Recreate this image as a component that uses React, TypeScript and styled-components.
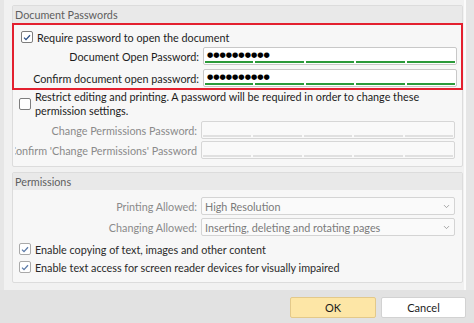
import React from 'react';
import styled, { createGlobalStyle } from 'styled-components';
import { ChevronDown } from 'lucide-react';

const GlobalStyle = createGlobalStyle`
  html, body {
    margin: 0;
    padding: 0;
    background: #e6e6e6;
  }
  * { box-sizing: border-box; }
`;

const Dialog = styled.div`
  width: 474px;
  height: 323px;
  display: flex;
  flex-direction: column;
  font-family: Lato, "Liberation Sans", sans-serif;
  font-size: 10.8px;
  color: #1c1c1c;
  overflow: hidden;
`;

const Body = styled.div`
  display: flex;
  height: 290px;
  padding-left: 4px;
`;

const Content = styled.div`
  width: 462px;
  background: #f1f1f1;
  border-right: 2px solid #fbfbfb;
  padding: 5px 1px 0 8px;
  display: flex;
  flex-direction: column;
  gap: 5px;
`;

const Group = styled.div<{ $h: number }>`
  height: ${p => p.$h}px;
  border: 1px solid #dcdcdc;
  border-radius: 2px;
  background: #f7f7f7;
  display: flex;
  flex-direction: column;
`;

const GroupTitle = styled.div`
  height: 17px;
  background: #e9e9e9;
  color: #5e5e5e;
  padding-left: 2px;
  line-height: 17px;
`;

const Highlight = styled.div`
  margin: 0 -1px;
  border: 2px solid #e3202f;
  padding: 6px 0 0 1px;
  height: 67px;
`;

const CheckRow = styled.div`
  display: flex;
  align-items: flex-start;
  gap: 4px;
  height: 18px;
  line-height: 13px;
  padding-left: 6px;
`;

const Box = styled.span<{ $soft?: boolean }>`
  flex: none;
  width: 12px;
  height: 12px;
  border: 1px solid ${p => (p.$soft ? '#a9a9a9' : '#7d7d7d')};
  border-radius: 2px;
  background: #fff;
  display: flex;
  align-items: center;
  justify-content: center;
`;

const Tick = ({ soft }: { soft?: boolean }) => (
  <svg width="8" height="7" viewBox="0 0 8 7">
    <path d="M1 3.6 L3 5.6 L7 1.2" fill="none" stroke={soft ? '#5b7aa8' : '#2b4f86'} strokeWidth="1.3" />
  </svg>
);

const FieldRow = styled.div<{ $top: number }>`
  display: flex;
  align-items: center;
  margin-top: ${p => p.$top}px;
  height: 18px;
`;

const Label = styled.div<{ $disabled?: boolean }>`
  width: 186px;
  margin-left: 2px;
  padding-right: 4px;
  display: flex;
  justify-content: flex-end;
  white-space: nowrap;
  overflow: hidden;
  color: ${p => (p.$disabled ? '#8a8a8a' : '#1c1c1c')};
`;

const Field = styled.div<{ $disabled?: boolean }>`
  width: 254px;
  height: 18px;
  border: 1px solid ${p => (p.$disabled ? '#d6d6d6' : '#c8c8c8')};
  border-radius: 2px;
  background: ${p => (p.$disabled ? '#f9f9f9' : '#fff')};
  display: flex;
  flex-direction: column;
  overflow: hidden;
`;

const Dots = styled.div`
  flex: 1;
  min-height: 0;
  padding: 3px 0 0 3px;
  font-family: "DejaVu Sans", sans-serif;
  font-size: 7.2px;
  line-height: 8px;
  color: #000;
`;

const Meter = styled.div`
  flex: none;
  display: flex;
  gap: 2px;
  height: 2px;
  margin: 0 1px 1px;
`;

const Segment = styled.span<{ $on: boolean }>`
  flex: 1;
  background: ${p => (p.$on ? '#2b9a3a' : '#e0e0e0')};
`;

const Select = styled.div`
  width: 254px;
  height: 18px;
  border: 1px solid #d4d4d4;
  border-radius: 2px;
  background: #fafafa;
  color: #7a7a7a;
  display: flex;
  align-items: center;
  justify-content: space-between;
  padding: 0 3px;
`;

const Restrict = styled.div`
  margin: 0 0 0 6px;
  display: flex;
  align-items: center;
  gap: 4px;
  line-height: 14px;
`;

const PermChecks = styled.div`
  margin-top: 7px;
  color: #2a2a2a;
`;

const Footer = styled.div`
  flex: 1;
  display: flex;
  justify-content: flex-end;
  align-items: flex-start;
  gap: 5px;
  padding: 7px 8px 0 0;
  background: #e2e2e2;
`;

const Button = styled.button<{ $primary?: boolean }>`
  width: ${p => (p.$primary ? 86 : 85)}px;
  height: 21px;
  border: 1px solid ${p => (p.$primary ? '#e3c98a' : '#d2d2d2')};
  border-radius: 2px;
  background: ${p => (p.$primary ? '#fde6a6' : '#fff')};
  font-family: inherit;
  font-size: 11px;
  color: #1c1c1c;
  padding: 0;
`;

const PasswordField = ({ value, on, disabled }: { value: string; on: boolean; disabled?: boolean }) => (
  <Field $disabled={disabled}>
    <Dots>{value}</Dots>
    <Meter>
      {[0, 1, 2, 3, 4].map(i => (
        <Segment key={i} $on={on} />
      ))}
    </Meter>
  </Field>
);

const App = () => {
  const dots = '\u25CF'.repeat(10);
  return (
    <Dialog>
      <GlobalStyle />
      <Body>
        <Content>
          <Group $h={162}>
            <GroupTitle>Document Passwords</GroupTitle>
            <Highlight>
              <CheckRow>
                <Box><Tick /></Box>
                <span>Require password to open the document</span>
              </CheckRow>
              <FieldRow $top={-2}>
                <Label>Document Open Password:</Label>
                <PasswordField value={dots} on />
              </FieldRow>
              <FieldRow $top={4}>
                <Label>Confirm document open password:</Label>
                <PasswordField value={dots} on />
              </FieldRow>
            </Highlight>
            <Restrict>
              <Box />
              <span>
                Restrict editing and printing. A password will be required in order to change these
                <br />
                permission settings.
              </span>
            </Restrict>
            <FieldRow $top={3}>
              <Label $disabled>Change Permissions Password:</Label>
              <PasswordField value="" on={false} disabled />
            </FieldRow>
            <FieldRow $top={2}>
              <Label $disabled>Confirm 'Change Permissions' Password</Label>
              <PasswordField value="" on={false} disabled />
            </FieldRow>
          </Group>
          <Group $h={111}>
            <GroupTitle>Permissions</GroupTitle>
            <FieldRow $top={7}>
              <Label $disabled>Printing Allowed:</Label>
              <Select>
                <span>High Resolution</span>
                <ChevronDown size={9} color="#8a8a8a" strokeWidth={2} />
              </Select>
            </FieldRow>
            <FieldRow $top={3}>
              <Label $disabled>Changing Allowed:</Label>
              <Select>
                <span>Inserting, deleting and rotating pages</span>
                <ChevronDown size={9} color="#8a8a8a" strokeWidth={2} />
              </Select>
            </FieldRow>
            <PermChecks>
              <CheckRow>
                <Box $soft><Tick soft /></Box>
                <span>Enable copying of text, images and other content</span>
              </CheckRow>
              <CheckRow>
                <Box $soft><Tick soft /></Box>
                <span>Enable text access for screen reader devices for visually impaired</span>
              </CheckRow>
            </PermChecks>
          </Group>
        </Content>
      </Body>
      <Footer>
        <Button $primary>OK</Button>
        <Button>Cancel</Button>
      </Footer>
    </Dialog>
  );
};

export default App;
